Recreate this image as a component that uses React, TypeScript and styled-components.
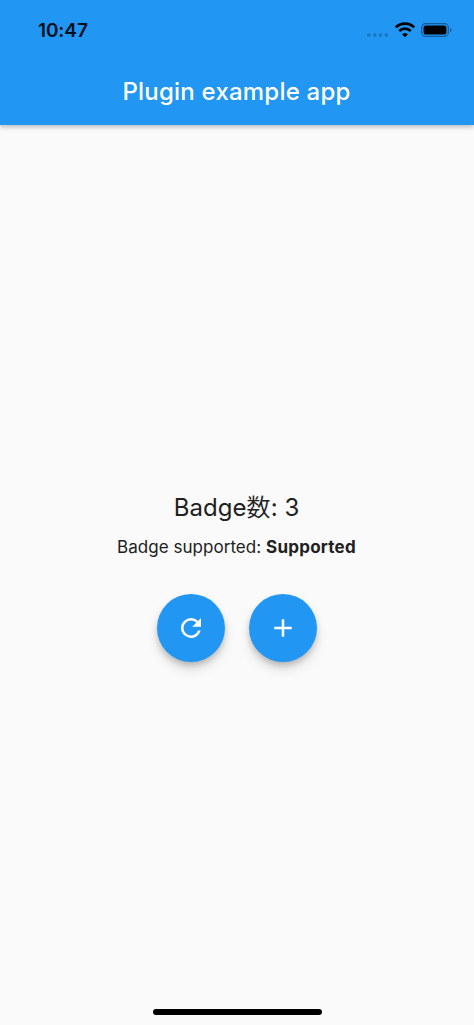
import React from "react";
import styled, { createGlobalStyle } from "styled-components";

const GlobalStyle = createGlobalStyle`
  * { box-sizing: border-box; }
  body { margin: 0; background: #fafafa; font-family: Inter, "Noto Sans CJK JP", sans-serif; }
`;
const Screen = styled.main`
  height: 1025px;
  display: flex;
  flex-direction: column;
  background: #fafafa;
  overflow: hidden;
`;
const Header = styled.header`
  height: 125px;
  flex: none;
  background: #2196f3;
  box-shadow: 0 2px 5px rgba(0, 0, 0, 0.26);
`;
const StatusBar = styled.div`
  height: 57px;
  padding: 3px 22px 0 38px;
  display: flex;
  align-items: center;
  justify-content: space-between;
`;
const Clock = styled.span`
  padding-top: 2px;
  font-size: 19px;
  line-height: 22px;
  font-weight: 600;
  letter-spacing: -0.1px;
  color: #03101c;
`;
const StatusIcons = styled.svg`
  display: block;
`;
const Title = styled.h1`
  margin: 0;
  padding-right: 1px;
  height: 68px;
  line-height: 69px;
  text-align: center;
  font-size: 24px;
  letter-spacing: 0.22px;
  font-weight: 500;
  color: #fff;
`;
const Body = styled.section`
  flex: 1;
  padding-top: 367px;
  display: flex;
  flex-direction: column;
  align-items: center;
`;
const Count = styled.p`
  margin: 0;
  padding-right: 1px;
  font-size: 24px;
  letter-spacing: 0.06px;
  line-height: 32px;
  color: #212121;
`;
const Kanji = styled.span`
  font-weight: 350;
`;
const Support = styled.p`
  margin: 11px 0 0;
  padding-right: 1px;
  font-size: 17px;
  letter-spacing: 0.04px;
  line-height: 24px;
  color: #212121;

  b {
    letter-spacing: 0.24px;
  }
`;
const Actions = styled.div`
  margin-top: 35px;
  display: flex;
  gap: 24px;
`;
const RoundButton = styled.button`
  width: 68px;
  height: 68px;
  padding: 0;
  border: 0;
  border-radius: 50%;
  display: flex;
  align-items: center;
  justify-content: center;
  background: #2196f3;
  box-shadow: 0 4px 6px -1px rgba(0, 0, 0, 0.2), 0 7px 12px rgba(0, 0, 0, 0.12);
`;
const HomeIndicator = styled.div`
  width: 169px;
  height: 6px;
  margin: auto auto 10px;
  border-radius: 3px;
  background: #000;
`;

export default function App() {
  return (
    <Screen>
      <GlobalStyle />
      <Header>
        <StatusBar>
          <Clock>10:47</Clock>
          <StatusIcons width="86" height="18" viewBox="0 0 86 18">
            <g fill="#1b79c4">
              <circle cx="3" cy="14" r="1.9" />
              <circle cx="8.8" cy="14" r="1.9" />
              <circle cx="14.6" cy="14" r="1.9" />
              <circle cx="20.4" cy="14" r="1.9" />
            </g>
            <g fill="none" stroke="#000" strokeWidth="2.7">
              <path d="M29.8 6.4a13.2 13.2 0 0 1 18.4 0" />
              <path d="M33.2 10a8.2 8.2 0 0 1 11.6 0" />
            </g>
            <path d="M39 16.3l-2.8-2.9a4.1 4.1 0 0 1 5.6 0z" />
            <rect x="55.7" y="2.6" width="26.6" height="12.8" rx="3.8" fill="none" stroke="#125e9e" strokeWidth="1.2" />
            <rect x="57.6" y="4.4" width="22.8" height="9.2" rx="2.2" />
            <path d="M84 7v4.2c1-.4 1.6-1.1 1.6-2.1S85 7.400 84 7z" fill="#125e9e" />
          </StatusIcons>
        </StatusBar>
        <Title>Plugin example app</Title>
      </Header>
      <Body>
        <Count>Badge<Kanji>数</Kanji>: 3</Count>
        <Support>Badge supported: <b>Supported</b></Support>
        <Actions>
          <RoundButton aria-label="Refresh">
            <svg width="30" height="30" viewBox="0 0 24 24" fill="#fff"><path d="M17.65 6.35A7.96 7.96 0 0 0 12 4a8 8 0 1 0 7.73 10h-2.08A6 6 0 1 1 12 6c1.66 0 3.14.69 4.22 1.78L13 11h7V4z" /></svg>
          </RoundButton>
          <RoundButton aria-label="Add">
            <svg width="30" height="30" viewBox="0 0 24 24" fill="#fff"><path d="M19 13h-6v6h-2v-6H5v-2h6V5h2v6h6z" /></svg>
          </RoundButton>
        </Actions>
      </Body>
      <HomeIndicator />
    </Screen>
  );
}
